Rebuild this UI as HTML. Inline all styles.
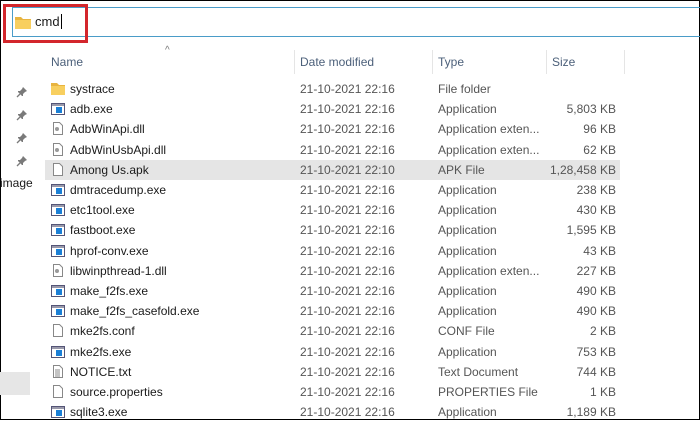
<!DOCTYPE html><html><head><style>
body{margin:0;width:700px;height:420px;overflow:hidden;background:#fff;font-family:"Liberation Sans",sans-serif;font-size:12px;color:#1a1a1a;position:relative}
.frame{position:absolute;left:0;top:0;width:698px;height:418px;border:1px solid #000;box-sizing:content-box}
.addr{position:absolute;left:12px;top:7px;width:690px;height:30px;border:1px solid #4a9cc8;box-sizing:border-box}
.red{position:absolute;left:3px;top:4px;width:85px;height:39px;border:3px solid #d3262c;box-sizing:border-box}
.ab{position:absolute;left:35px;top:14px;font-size:13px}
.h{position:absolute;top:55px;color:#4c607a;font-size:12px}
.sep{position:absolute;top:50px;width:1px;height:24px;background:#e5e5e5}
.row{position:absolute;left:45px;width:575px;height:20px}
.row span{position:absolute;top:3px;white-space:nowrap}
.n{left:25px}.d{left:255px;color:#555}.t{left:393px;color:#555}.s{right:4px;color:#555}
.ic{position:absolute;left:6px;top:3px;width:14px;height:13px}
.pin{position:absolute;left:16px}
</style></head><body>
<div class="frame"></div>
<div class="addr"></div>
<svg style="position:absolute;left:15px;top:16px" width="16" height="13"><path d="M0 1h6l2 2h8v10H0z" fill="#e8b440"/><path d="M0 4h16v9H0z" fill="#f8cf5f"/></svg>
<div class="ab">cmd<span style="border-left:1px solid #000;margin-left:1px"></span></div>
<div class="red"></div>
<div style="position:absolute;left:165px;top:45px;color:#777;font-size:10px">^</div>
<div class="h" style="left:51px">Name</div><div class="sep" style="left:294px"></div>
<div class="h" style="left:300px">Date modified</div><div class="sep" style="left:432px"></div>
<div class="h" style="left:438px">Type</div><div class="sep" style="left:546px"></div>
<div class="h" style="left:552px">Size</div><div class="sep" style="left:624px"></div>
<svg class="pin" style="top:86px" width="12" height="12"><path d="M7 1l4 4-2 1-2 2 0 2-1 0-4-4 0-1 2 0 2-2z" fill="#7a7a7a"/><path d="M4 8l-3 3" stroke="#7a7a7a" stroke-width="1.3"/></svg>
<svg class="pin" style="top:109px" width="12" height="12"><path d="M7 1l4 4-2 1-2 2 0 2-1 0-4-4 0-1 2 0 2-2z" fill="#7a7a7a"/><path d="M4 8l-3 3" stroke="#7a7a7a" stroke-width="1.3"/></svg>
<svg class="pin" style="top:132px" width="12" height="12"><path d="M7 1l4 4-2 1-2 2 0 2-1 0-4-4 0-1 2 0 2-2z" fill="#7a7a7a"/><path d="M4 8l-3 3" stroke="#7a7a7a" stroke-width="1.3"/></svg>
<svg class="pin" style="top:155px" width="12" height="12"><path d="M7 1l4 4-2 1-2 2 0 2-1 0-4-4 0-1 2 0 2-2z" fill="#7a7a7a"/><path d="M4 8l-3 3" stroke="#7a7a7a" stroke-width="1.3"/></svg>
<div style="position:absolute;left:0;top:176px;font-size:12px">image</div>
<div style="position:absolute;left:0;top:372px;width:30px;height:23px;background:#e6e6e6"></div>
<div id="rows"></div>
<script>
var d=[["f","systrace","File folder",""],["e","adb.exe","Application","5,803 KB"],["g","AdbWinApi.dll","Application exten...","96 KB"],["g","AdbWinUsbApi.dll","Application exten...","62 KB"],["p","Among Us.apk","APK File","1,28,458 KB"],["e","dmtracedump.exe","Application","238 KB"],["e","etc1tool.exe","Application","430 KB"],["e","fastboot.exe","Application","1,595 KB"],["e","hprof-conv.exe","Application","43 KB"],["g","libwinpthread-1.dll","Application exten...","227 KB"],["e","make_f2fs.exe","Application","490 KB"],["e","make_f2fs_casefold.exe","Application","490 KB"],["p","mke2fs.conf","CONF File","2 KB"],["e","mke2fs.exe","Application","753 KB"],["x","NOTICE.txt","Text Document","744 KB"],["p","source.properties","PROPERTIES File","1 KB"],["e","sqlite3.exe","Application","1,189 KB"]];
var ic={f:'<path d="M0 1h6l2 2h6v10H0z" fill="#e8b440"/><path d="M0 4h14v9H0z" fill="#f8cf5f"/>',
e:'<rect x=".5" y="1.5" width="13" height="11" fill="#fff" stroke="#557"/><rect x="1" y="2" width="12" height="2" fill="#99a"/><rect x="5" y="5" width="6" height="6" fill="#1a7fd6"/>',
g:'<path d="M2.5 .5h6l3 3v9h-9z" fill="#fff" stroke="#888"/><circle cx="6" cy="7" r="2" fill="#999"/>',
p:'<path d="M2.5 .5h6l3 3v9h-9z" fill="#fff" stroke="#888"/>',
x:'<path d="M2.5 .5h6l3 3v9h-9z" fill="#fff" stroke="#888"/><path d="M4 5h5M4 7h5M4 9h5M4 11h5" stroke="#888"/>'};
var h='';d.forEach(function(r,i){var y=79+i*20.2;h+='<div class="row" style="top:'+y+'px;'+(i==4?'background:#e5e5e5':'')+'"><svg class="ic" viewBox="0 0 14 13">'+ic[r[0]]+'</svg><span class="n">'+r[1]+'</span><span class="d">21-10-2021 '+(i==4?'22:10':'22:16')+'</span><span class="t">'+r[2]+'</span><span class="s">'+r[3]+'</span></div>'});
document.getElementById('rows').innerHTML=h;
</script>
</body></html>
